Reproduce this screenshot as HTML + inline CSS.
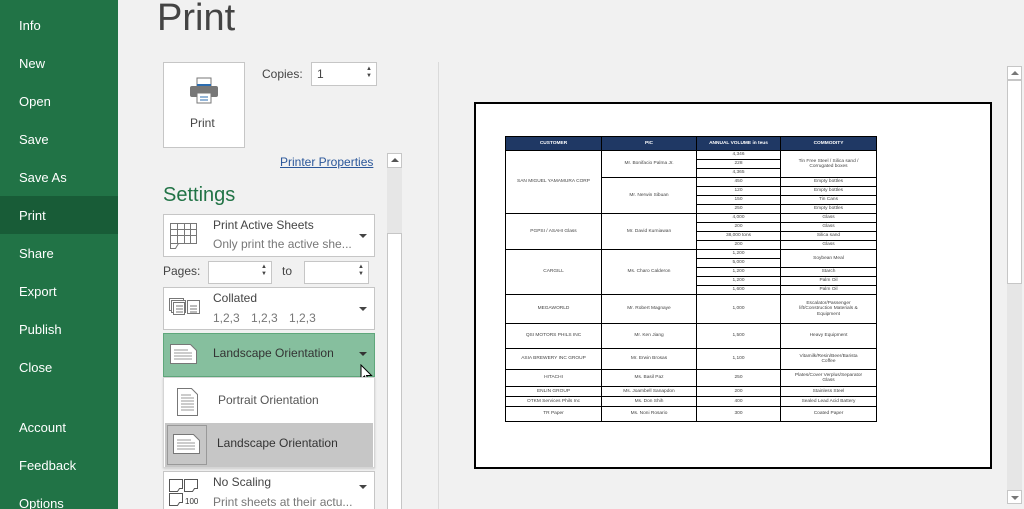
<!DOCTYPE html>
<html><head><meta charset="utf-8"><style>
*{margin:0;padding:0;box-sizing:border-box}
html,body{width:1024px;height:509px;overflow:hidden}
body{background:#f1f1f1;font-family:"Segoe UI","Liberation Sans",sans-serif;position:relative;color:#444}
.side{position:absolute;left:0;top:0;width:118px;height:509px;background:#217346}
.side div{position:absolute;left:19px;color:#fff;font-size:13px}
.sel{position:absolute;left:0;top:196px;width:118px;height:38px;background:#185c37}
.a{position:absolute}
.box{position:absolute;background:#fff;border:1px solid #c6c6c6}
.t1{font-size:12px;color:#444}
.t2{font-size:12px;color:#777}
.arrow{position:absolute;width:0;height:0;border-left:4px solid transparent;border-right:4px solid transparent;border-top:4px solid #444}
.spin{position:absolute;right:4px;font-size:6px;color:#444;line-height:7px}
table{border-collapse:collapse;position:absolute;left:505px;top:136px;width:371px;font-family:"Liberation Sans",sans-serif;font-size:4.8px;color:#444;table-layout:fixed}
td,th{border:1px solid #000;text-align:center;padding:0;line-height:5.5px;overflow:hidden}
th{background:#1f3864;color:#fff;height:14px;font-size:4.8px}
</style></head><body>
<div class="side">
<div class="sel" style="left:0"></div>
<div style="top:18px">Info</div>
<div style="top:56px">New</div>
<div style="top:94px">Open</div>
<div style="top:132px">Save</div>
<div style="top:170px">Save As</div>
<div style="top:208px">Print</div>
<div style="top:246px">Share</div>
<div style="top:284px">Export</div>
<div style="top:322px">Publish</div>
<div style="top:360px">Close</div>
<div style="top:420px">Account</div>
<div style="top:458px">Feedback</div>
<div style="top:496px">Options</div>
</div>
<div class="a" style="left:157px;top:-3px;font-size:38px;font-weight:300;color:#444">Print</div>
<div class="box" style="left:163px;top:62px;width:82px;height:86px">
<svg style="position:absolute;left:25px;top:14px" width="30" height="30" viewBox="0 0 30 30"><rect x="8" y="1" width="14" height="9" fill="#fff" stroke="#777"/><rect x="8" y="7" width="14" height="2" fill="#2b6cb0"/><rect x="1" y="9" width="28" height="11" rx="2" fill="#777"/><rect x="8" y="16" width="14" height="10" fill="#fff" stroke="#777"/><line x1="11" y1="20" x2="19" y2="20" stroke="#2b6cb0"/><line x1="11" y1="23" x2="19" y2="23" stroke="#2b6cb0"/></svg>
<div class="a t1" style="left:26px;top:53px">Print</div></div>
<div class="a t1" style="left:262px;top:67px">Copies:</div>
<div class="box" style="left:311px;top:62px;width:66px;height:24px"><span class="a t1" style="left:5px;top:4px">1</span><span class="spin" style="top:3px">▲<br>▼</span></div>
<div class="a" style="left:280px;top:155px;font-size:12px;color:#2b579a;text-decoration:underline">Printer Properties</div>
<div class="a" style="left:163px;top:184px;font-size:20px;color:#217346">Settings</div>
<div class="a" style="left:387px;top:153px;width:15px;height:356px;background:#e6e6e6"></div>
<div class="box" style="left:387px;top:153px;width:15px;height:15px"><div class="arrow" style="left:3px;top:4px;border-top:0;border-bottom:4px solid #555"></div></div>
<div class="box" style="left:387px;top:233px;width:15px;height:280px"></div>
<div class="a" style="left:438px;top:62px;width:1px;height:447px;background:#dadada"></div>
<div class="box" style="left:163px;top:214px;width:212px;height:43px">
<svg class="a" style="left:5px;top:7px" width="30" height="28"><g fill="none" stroke="#777"><rect x="1.5" y="1.5" width="26" height="20"/><path d="M1.5 7.5h26M1.5 13.5h26M8.5 1.5v20M15.5 1.5v20M21.5 1.5v20"/><path d="M1.5 21.5v5h5l3-5"/></g></svg>
<div class="a t1" style="left:49px;top:3px">Print Active Sheets</div>
<div class="a t2" style="left:49px;top:22px">Only print the active she...</div>
<div class="arrow" style="left:195px;top:19px"></div></div>
<div class="a t1" style="left:163px;top:264px">Pages:</div>
<div class="box" style="left:208px;top:261px;width:64px;height:23px"><span class="spin" style="top:2px">▲<br>▼</span></div>
<div class="a t1" style="left:282px;top:264px">to</div>
<div class="box" style="left:304px;top:261px;width:65px;height:23px"><span class="spin" style="top:2px">▲<br>▼</span></div>
<div class="box" style="left:163px;top:287px;width:212px;height:43px">
<svg class="a" style="left:4px;top:9px" width="34" height="22"><g fill="#fff" stroke="#777"><rect x="1.5" y="1.5" width="14" height="12"/><rect x="3.5" y="3.5" width="14" height="12"/><rect x="5.5" y="5.5" width="11" height="12"/><rect x="19.5" y="3.5" width="12" height="13"/></g><path d="M8 9h7M8 12h7M8 15h7M22 9h7M22 12h7M22 15h7" stroke="#777"/></svg>
<div class="a t1" style="left:49px;top:3px">Collated</div>
<div class="a t2" style="left:49px;top:23px;word-spacing:8px">1,2,3 1,2,3 1,2,3</div>
<div class="arrow" style="left:195px;top:19px"></div></div>
<div class="a" style="left:163px;top:333px;width:212px;height:44px;background:#86bf9e;border:1px solid #5fa77b">
<svg class="a" style="left:5px;top:9px" width="30" height="22"><path d="M1.5 1.5h20l6 6v13h-26z" fill="#fff" stroke="#777"/><path d="M5 7h14M5 10h18M5 13h18M5 16h18" stroke="#999"/></svg>
<div class="a t1" style="left:49px;top:12px;color:#333">Landscape Orientation</div>
<div class="arrow" style="left:195px;top:18px;border-top-color:#333"></div></div>
<svg class="a" style="left:360px;top:364px" width="14" height="20"><path d="M1 1v14l3.5-3 2.5 6 2-1-2.5-5.5h5z" fill="#fff" stroke="#000"/></svg>
<div class="a" style="left:163px;top:377px;width:212px;height:91px;background:#fff;border:1px solid #d5d5d5;box-shadow:0 1px 2px rgba(0,0,0,.15)">
<svg class="a" style="left:12px;top:9px" width="24" height="30"><path d="M1.5 1.5h14l6 6v21h-20z" fill="#fff" stroke="#777"/><path d="M5 8h10M5 11h13M5 14h13M5 17h13M5 20h13M5 23h13" stroke="#999"/></svg>
<div class="a t1" style="left:54px;top:15px;color:#555">Portrait Orientation</div>
<div class="a" style="left:1px;top:45px;width:208px;height:44px;background:#c6c6c6"></div>
<div class="a" style="left:3px;top:47px;width:40px;height:40px;border:1px solid #999"></div>
<svg class="a" style="left:8px;top:55px" width="30" height="22"><path d="M1.5 1.5h20l6 6v13h-26z" fill="#fff" stroke="#777"/><path d="M5 7h14M5 10h18M5 13h18M5 16h18" stroke="#999"/></svg>
<div class="a t1" style="left:53px;top:58px;color:#333">Landscape Orientation</div></div>
<div class="box" style="left:163px;top:471px;width:212px;height:43px">
<svg class="a" style="left:4px;top:6px" width="34" height="30"><g fill="#fff" stroke="#555"><path d="M1.5 1.5h13v9h-3l-2 3h-8z"/><path d="M16.5 1.5h13v9h-3l-2 3h-8z"/><path d="M1.5 15.5h13v9h-3l-2 3h-8z"/></g><text x="17" y="26" font-size="8" font-family="Liberation Sans" fill="#333">100</text></svg>
<div class="a t1" style="left:49px;top:3px">No Scaling</div>
<div class="a t2" style="left:49px;top:23px">Print sheets at their actu...</div>
<div class="arrow" style="left:195px;top:13px"></div></div>
<div class="a" style="left:1007px;top:66px;width:15px;height:438px;background:#e6e6e6"></div>
<div class="box" style="left:1007px;top:66px;width:15px;height:14px"><div class="arrow" style="left:3px;top:4px;border-top:0;border-bottom:4px solid #777"></div></div>
<div class="box" style="left:1007px;top:80px;width:15px;height:204px"></div>
<div class="box" style="left:1007px;top:490px;width:15px;height:14px"><div class="arrow" style="left:3px;top:5px;border-top-color:#777"></div></div>
<div class="a" style="left:474px;top:102px;width:518px;height:367px;background:#fff;border:2px solid #000"></div>
<table>
<colgroup><col style="width:96px"><col style="width:95px"><col style="width:84px"><col style="width:96px"></colgroup>
<tr><th>CUSTOMER</th><th>PIC</th><th>ANNUAL VOLUME in teus</th><th>COMMODITY</th></tr>
<tr style="height:9px"><td rowspan="7">SAN MIGUEL YAMAMURA CORP</td><td rowspan="3">Mr. Bonifacio Palma Jr.</td><td>4,346</td><td rowspan="3">Tin Free Steel / Silica sand /<br>Corrugated boxes</td></tr>
<tr style="height:9px"><td>228</td></tr>
<tr style="height:9px"><td>4,365</td></tr>
<tr style="height:9px"><td rowspan="4">Mr. Nerwin Sibuan</td><td>450</td><td>Empty bottles</td></tr>
<tr style="height:9px"><td>120</td><td>Empty bottles</td></tr>
<tr style="height:9px"><td>150</td><td>Tin Cans</td></tr>
<tr style="height:9px"><td>250</td><td>Empty bottles</td></tr>
<tr style="height:9px"><td rowspan="4">PGPSI / ASAHI Glass</td><td rowspan="4">Mr. David Kurniawan</td><td>4,000</td><td>Glass</td></tr>
<tr style="height:9px"><td>200</td><td>Glass</td></tr>
<tr style="height:9px"><td>38,000 tons</td><td>Silica sand</td></tr>
<tr style="height:9px"><td>200</td><td>Glass</td></tr>
<tr style="height:9px"><td rowspan="5">CARGILL</td><td rowspan="5">Ms. Charo Calderon</td><td>1,200</td><td rowspan="2">Soybean Meal</td></tr>
<tr style="height:9px"><td>5,000</td></tr>
<tr style="height:9px"><td>1,200</td><td>Starch</td></tr>
<tr style="height:9px"><td>1,200</td><td>Palm Oil</td></tr>
<tr style="height:9px"><td>1,600</td><td>Palm Oil</td></tr>
<tr style="height:29px"><td>MEGAWORLD</td><td>Mr. Robert Magnaye</td><td>1,000</td><td>Escalator/Passenger<br>lift/Construction Materials &amp;<br>Equipment</td></tr>
<tr style="height:25px"><td>QSI MOTORS PHILS INC</td><td>Mr. Ken Jiang</td><td>1,500</td><td>Heavy Equipment</td></tr>
<tr style="height:21px"><td>ASIA BREWERY INC GROUP</td><td>Mr. Erwin Brosas</td><td>1,100</td><td>Vitamilk/Resin/Beer/Barista<br>Coffee</td></tr>
<tr style="height:17px"><td>HITACHI</td><td>Ms. Basil Paz</td><td>250</td><td>Plates/Cover Verplus/Separator<br>Glass</td></tr>
<tr style="height:10px"><td>ENLIN GROUP</td><td>Ms. Joambell Sanapdon</td><td>200</td><td>Stainless Steel</td></tr>
<tr style="height:10px"><td>OTKM Services Phils Inc</td><td>Ms. Don Shih</td><td>400</td><td>Sealed Lead Acid Battery</td></tr>
<tr style="height:15px"><td>TR Paper</td><td>Ms. Noni Rosario</td><td>300</td><td>Coated Paper</td></tr>
</table>
</body></html>
